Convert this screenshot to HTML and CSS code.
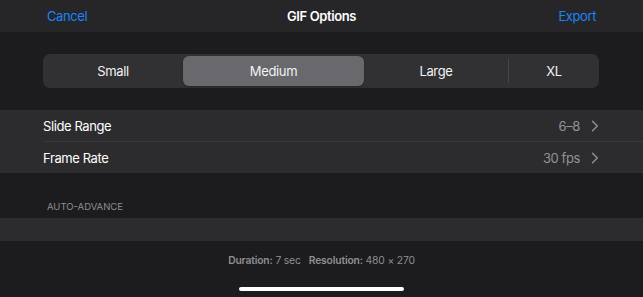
FILE: index.html
```html
<!DOCTYPE html>
<html lang="en">
<head>
<meta charset="utf-8">
<title>GIF Options</title>
<link rel="stylesheet" href="styles.css">
</head>
<body>
<div class="screen">
  <header class="navbar">
    <span class="nav-btn">Cancel</span>
    <span class="nav-title">GIF Options</span>
    <span class="nav-btn">Export</span>
  </header>

  <div class="seg-wrap">
    <div class="segmented">
      <div class="seg seg-small">Small</div>
      <div class="seg seg-medium selected">Medium</div>
      <div class="seg seg-large">Large</div>
      <div class="seg-divider"></div>
      <div class="seg seg-xl">XL</div>
    </div>
  </div>

  <div class="group">
    <div class="row">
      <span class="row-label">Slide Range</span>
      <span class="row-value">6–8</span>
      <svg class="chev" width="8" height="12" viewBox="0 0 8 12"><path d="M1.5 1.2 L6.3 6 L1.5 10.8" fill="none" stroke="#8e8e93" stroke-width="1.5" stroke-linecap="round" stroke-linejoin="round"/></svg>
    </div>
    <div class="row-sep"></div>
    <div class="row">
      <span class="row-label">Frame Rate</span>
      <span class="row-value">30 fps</span>
      <svg class="chev" width="8" height="12" viewBox="0 0 8 12"><path d="M1.5 1.2 L6.3 6 L1.5 10.8" fill="none" stroke="#8e8e93" stroke-width="1.5" stroke-linecap="round" stroke-linejoin="round"/></svg>
    </div>
  </div>

  <div class="section-head">AUTO-ADVANCE</div>
  <div class="empty-row"></div>

  <div class="info">
    <span class="info-item"><b>Duration:</b> 7 sec</span>
    <span class="info-item"><b>Resolution:</b> 480 × 270</span>
  </div>

  <div class="home-wrap"><div class="home-indicator"></div></div>
</div>
</body>
</html>
```
FILE: styles.css
```css
html, body {
  margin: 0;
  padding: 0;
  background: #1c1c1e;
}
body {
  font-family: Inter, "Liberation Sans", sans-serif;
  color: #ffffff;
  width: 643px;
  height: 297px;
  overflow: hidden;
}
.screen {
  display: flex;
  flex-direction: column;
  height: 297px;
}
.navbar {
  height: 32px;
  background: #262628;
  display: flex;
  align-items: center;
  justify-content: space-between;
  padding: 0 47px;
  box-sizing: border-box;
}
.nav-btn {
  color: #1a84fa;
  font-size: 13px;
  letter-spacing: -0.4px;
  width: 60px;
}
.nav-btn:last-child { text-align: right; }
.nav-title {
  font-size: 13px;
  font-weight: 600;
  letter-spacing: -0.4px;
}
.seg-wrap {
  padding: 22px 44px 22px 43px;
}
.segmented {
  height: 34px;
  background: #313134;
  border-radius: 7px;
  display: flex;
  align-items: center;
  padding: 0;
}
.seg {
  height: 30px;
  display: flex;
  align-items: center;
  justify-content: center;
  font-size: 13px;
  letter-spacing: -0.35px;
  color: #f2f2f2;
  border-radius: 6px;
}
.seg-small { width: 140px; }
.seg-medium { width: 181px; }
.seg-large { width: 144px; }
.seg-xl { flex: 1; }
.seg.selected {
  background: #68686d;
  box-shadow: 0 1px 2px rgba(0,0,0,0.25);
}
.seg-divider {
  width: 1px;
  height: 24px;
  background: #46464a;
}
.group {
  background: #2c2c2e;
}
.row {
  height: 31px;
  display: flex;
  align-items: center;
  padding: 0 44px 0 43px;
}
.row-sep {
  height: 1px;
  margin-left: 43px;
  background: #38383b;
}
.row-label {
  font-size: 13px;
  letter-spacing: -0.4px;
  flex: 1;
}
.row-value {
  font-size: 13px;
  letter-spacing: -0.4px;
  color: #929297;
  margin-right: 11px;
}
.chev { display: block; }
.section-head {
  margin-top: 28px;
  padding-left: 47px;
  height: 17px;
  font-size: 9.5px;
  color: #8e8e93;
  letter-spacing: 0;
}
.empty-row {
  height: 23px;
  background: #2c2c2e;
}
.info {
  display: flex;
  justify-content: center;
  gap: 8px;
  margin-top: 12px;
  font-size: 10.3px;
  color: #8e8e93;
  letter-spacing: -0.15px;
  line-height: 14px;
}
.info b { font-weight: 600; }
.home-wrap {
  display: flex;
  justify-content: center;
  margin-top: 20px;
}
.home-indicator {
  width: 165px;
  height: 4px;
  border-radius: 2px;
  background: #ffffff;
}
```
